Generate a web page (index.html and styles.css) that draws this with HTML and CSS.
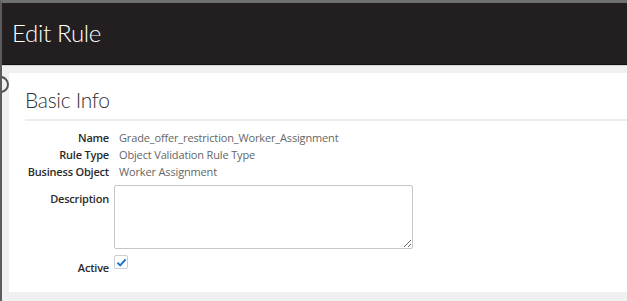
FILE: index.html
```html
<!DOCTYPE html>
<html>
<head>
    <title>Edit Rule</title>
    <link rel="stylesheet" href="styles.css">
</head>
<body>
    <div class="page-header">
        <h1>Edit Rule</h1>
    </div>
    <div class="content">
        <span class="ring"></span>
        <div class="panel">
            <h2>Basic Info</h2>
            <div class="form">
                <label>Name</label>
                <div class="value">Grade_offer_restriction_Worker_Assignment</div>

                <label>Rule Type</label>
                <div class="value">Object Validation Rule Type</div>

                <label>Business Object</label>
                <div class="value">Worker Assignment</div>

                <label class="desc-label">Description</label>
                <div class="field"><textarea class="desc"></textarea></div>

                <label class="active-label">Active</label>
                <div class="field">
                    <span class="check">
                        <svg width="11" height="11" viewBox="0 0 11 11"><path d="M1.5 5.8 L4.2 8.4 L9.6 2.4" fill="none" stroke="#1a74d0" stroke-width="2"/></svg>
                    </span>
                </div>
            </div>
        </div>
    </div>
</body>
</html>
```

FILE: styles.css
```css
body { margin: 0; background: #f0f0f0; border-top: 3px solid #707070; border-left: 2px solid #5c5c5c; height: 298px; font-family: "Open Sans", Arial, sans-serif; overflow: hidden; }
.page-header { background: #231f20; height: 61px; border-bottom: 1px solid #121010; box-shadow: 0 1px 0 #d6d6d6; display: flex; align-items: center; padding-left: 10px; }
.page-header h1 { margin: 0 0 2px; color: #fff; font-family: Lato, sans-serif; font-weight: 300; font-size: 24px; letter-spacing: -0.3px; }
.content { position: relative; padding: 8px 0 0 7px; }
.ring { position: absolute; left: -10px; top: 11px; width: 13px; height: 13px; border: 2px solid #555; border-radius: 50%; background: transparent; }
.panel { background: #fff; height: 219px; padding: 0 0 0 16px; }
.panel h2 { margin: 0; padding-top: 12px; font-family: Lato, sans-serif; font-weight: 300; font-size: 21px; color: #333; letter-spacing: -0.3px; line-height: 30px; border-bottom: 2px solid #ececf0; padding-bottom: 4px; }
.form { display: grid; grid-template-columns: 100px 1fr; column-gap: 5px; margin-left: -16px; padding-top: 8px; font-size: 11px; line-height: 17px; }
.form label { text-align: right; font-weight: 600; color: #2b2b2b; letter-spacing: -0.2px; }
.value { color: #666; padding-left: 5px; letter-spacing: -0.15px; }
.desc-label { padding-top: 10px; }
.field { margin-top: 5px; }
.desc { display: block; width: 299px; height: 64px; box-sizing: border-box; border: 1px solid #c3c7cc; border-radius: 2px; margin: 0; padding: 4px; font-family: inherit; }
.active-label { margin-top: 10px; }
.check { display: inline-flex; align-items: center; justify-content: center; width: 12px; height: 12px; border: 1px solid #c9ced4; border-radius: 2px; background: #fff; margin-top: 1px; }
```
